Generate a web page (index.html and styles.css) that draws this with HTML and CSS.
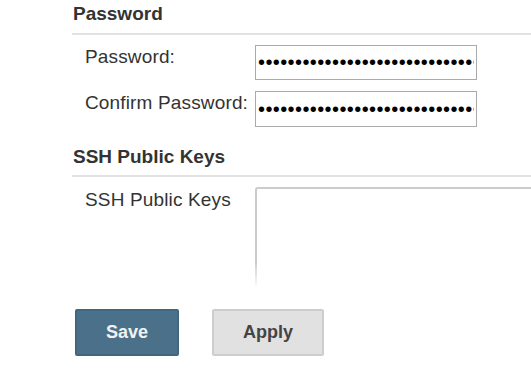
FILE: index.html
```html
<!DOCTYPE html>
<html lang="en">
<head>
    <meta charset="UTF-8">
    <title>Account Settings</title>
    <link rel="stylesheet" href="styles.css">
</head>
<body>
    <div class="page">
        <h3 class="section-title">Password</h3>
        <div class="row">
            <label class="field-label" for="pw">Password:</label>
            <input type="password" id="pw" class="text-input" value="abcdefghijabcdefghijabcdefghijabcdefghij">
        </div>
        <div class="row">
            <label class="field-label" for="pw2">Confirm Password:</label>
            <input type="password" id="pw2" class="text-input" value="abcdefghijabcdefghijabcdefghijabcdefghij">
        </div>

        <h3 class="section-title ssh">SSH Public Keys</h3>
        <div class="row keys-row">
            <label class="field-label" for="keys">SSH Public Keys</label>
            <div class="keys-wrap">
                <textarea id="keys" class="keys"></textarea>
            </div>
        </div>

        <div class="actions">
            <button class="btn btn-save">Save</button>
            <button class="btn btn-apply">Apply</button>
        </div>
    </div>
</body>
</html>
```

FILE: styles.css
```css
body {
    margin: 0;
    padding: 0;
    background: #fff;
    font-family: "Liberation Sans", Arial, sans-serif;
    color: #333;
    overflow: hidden;
}
.page {
    padding: 3px 0 0 72px;
}
.section-title {
    margin: 0;
    padding: 0 0 8px 1px;
    font-size: 19px;
    line-height: 22px;
    font-weight: bold;
    color: #333;
    border-bottom: 2px solid #e2e2e2;
}
.section-title.ssh {
    margin-top: 19px;
    padding-bottom: 7px;
}
.row {
    display: flex;
    align-items: flex-start;
    margin-top: 10px;
}
.row + .row {
    margin-top: 11px;
}
.field-label {
    box-sizing: border-box;
    width: 183px;
    padding: 1px 0 0 13px;
    font-size: 19px;
    line-height: 22px;
    letter-spacing: 0.15px;
    color: #333;
}
.text-input {
    box-sizing: border-box;
    width: 222px;
    height: 35px;
    border: 1px solid #aaa;
    padding: 0 2px;
    font-family: "Liberation Sans", Arial, sans-serif;
    font-size: 20px;
    letter-spacing: 0.4px;
    color: #000;
    outline: none;
}
.row + .row .text-input {
    height: 36px;
}
.keys-row {
    margin-top: 10px;
}
.keys-row .field-label {
    padding-top: 2px;
}
.keys-wrap {
    flex: 1;
    height: 101px;
    overflow: hidden;
    -webkit-mask-image: linear-gradient(to bottom, #000 75%, transparent 100%);
    mask-image: linear-gradient(to bottom, #000 75%, transparent 100%);
}
.keys {
    box-sizing: border-box;
    width: 300px;
    height: 140px;
    border: 2px solid #ccc;
    border-radius: 3px;
    resize: none;
    outline: none;
}
.actions {
    display: flex;
    gap: 33px;
    margin-top: 21px;
    padding-left: 3px;
}
.btn {
    box-sizing: border-box;
    height: 47px;
    font-family: "Liberation Sans", Arial, sans-serif;
    font-size: 18px;
    font-weight: bold;
    border-radius: 2px;
    cursor: pointer;
}
.btn-save {
    width: 104px;
    background-color: #4a7189;
    border: 2px solid #3f6880;
    color: #f2f2f2;
}
.btn-apply {
    width: 112px;
    background-color: #e1e1e1;
    border: 2px solid #cdcdcd;
    color: #444;
}
```
